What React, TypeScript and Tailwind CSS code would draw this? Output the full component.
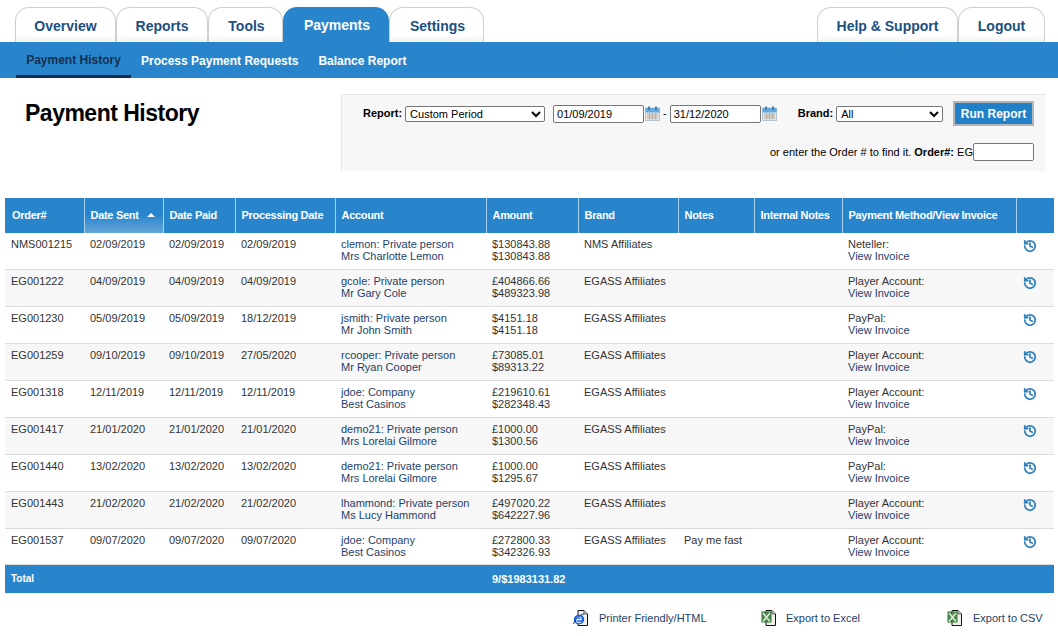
import { History } from "lucide-react";

const tabs = [
  { label: "Overview", w: "w-[101px]" },
  { label: "Reports", w: "w-[92px]" },
  { label: "Tools", w: "w-[75px] pl-[2px]" },
  { label: "Payments", w: "w-[106px] pl-[2px]", active: true },
  { label: "Settings", w: "w-[95px] pl-[2px]" },
];

const rows = [
  ["NMS001215", "02/09/2019", "02/09/2019", "02/09/2019", "clemon: Private person", "Mrs Charlotte Lemon", "$130843.88", "$130843.88", "NMS Affiliates", "", "Neteller:"],
  ["EG001222", "04/09/2019", "04/09/2019", "04/09/2019", "gcole: Private person", "Mr Gary Cole", "£404866.66", "$489323.98", "EGASS Affiliates", "", "Player Account:"],
  ["EG001230", "05/09/2019", "05/09/2019", "18/12/2019", "jsmith: Private person", "Mr John Smith", "$4151.18", "$4151.18", "EGASS Affiliates", "", "PayPal:"],
  ["EG001259", "09/10/2019", "09/10/2019", "27/05/2020", "rcooper: Private person", "Mr Ryan Cooper", "£73085.01", "$89313.22", "EGASS Affiliates", "", "Player Account:"],
  ["EG001318", "12/11/2019", "12/11/2019", "12/11/2019", "jdoe: Company", "Best Casinos", "£219610.61", "$282348.43", "EGASS Affiliates", "", "Player Account:"],
  ["EG001417", "21/01/2020", "21/01/2020", "21/01/2020", "demo21: Private person", "Mrs Lorelai Gilmore", "£1000.00", "$1300.56", "EGASS Affiliates", "", "PayPal:"],
  ["EG001440", "13/02/2020", "13/02/2020", "13/02/2020", "demo21: Private person", "Mrs Lorelai Gilmore", "£1000.00", "$1295.67", "EGASS Affiliates", "", "PayPal:"],
  ["EG001443", "21/02/2020", "21/02/2020", "21/02/2020", "lhammond: Private person", "Ms Lucy Hammond", "£497020.22", "$642227.96", "EGASS Affiliates", "", "Player Account:"],
  ["EG001537", "09/07/2020", "09/07/2020", "09/07/2020", "jdoe: Company", "Best Casinos", "£272800.33", "$342326.93", "EGASS Affiliates", "Pay me fast", "Player Account:"],
];

const headers = [
  { label: "Order#", w: "w-[79px]" },
  { label: "Date Sent", w: "w-[79px]", sorted: true },
  { label: "Date Paid", w: "w-[72px]" },
  { label: "Processing Date", w: "w-[100px]" },
  { label: "Account", w: "w-[151px]" },
  { label: "Amount", w: "w-[92px]" },
  { label: "Brand", w: "w-[100px]" },
  { label: "Notes", w: "w-[76px]" },
  { label: "Internal Notes", w: "w-[88px]" },
  { label: "Payment Method/View Invoice", w: "w-[174px]" },
  { label: "", w: "w-[38px]" },
];

function Tab({ label, w, active }: { label: string; w: string; active?: boolean }) {
  return (
    <a
      className={
        active
          ? `${w} flex h-[35px] items-center justify-center rounded-t-[14px] bg-[#2885cc] pt-[2px] text-[14px] font-bold text-white`
          : `${w} flex h-[35px] items-center justify-center rounded-t-[14px] border border-b-0 border-[#cfcfcf] bg-gradient-to-b from-white from-80% to-[#f1f1f1] pt-[2px] text-[14px] font-bold text-[#1c4f82]`
      }
    >
      {label}
    </a>
  );
}

function CalendarIcon() {
  return (
    <svg width="15" height="15" viewBox="0 0 15 15" className="shrink-0">
      <rect x="0.5" y="2" width="14" height="12.5" fill="#e9e6e1" stroke="#b5c4cf" />
      <rect x="0.5" y="2" width="14" height="4.5" fill="#62acdd" />
      <rect x="3" y="0.5" width="2" height="3.5" fill="#4d7c9c" />
      <rect x="10" y="0.5" width="2" height="3.5" fill="#4d7c9c" />
      <path d="M2 8h11M2 10h11M2 12h11M4.5 7.5v6M7.5 7.5v6M10.5 7.5v6" stroke="#a9a49c" strokeWidth="0.8" />
    </svg>
  );
}

function DocIcon({ children }: { children: React.ReactNode }) {
  return (
    <svg width="16" height="16" viewBox="0 0 16 16" className="shrink-0">
      <path d="M5 0.5h6l3.5 3.5v11.5H5z" fill="#f2f2ea" stroke="#111" strokeWidth="1" />
      <path d="M11 0.5v3.5h3.5" fill="#cfcfcf" stroke="#444" strokeWidth="0.8" />
      {children}
    </svg>
  );
}

function IeIcon() {
  return (
    <DocIcon>
      <ellipse cx="6" cy="9.5" rx="5.2" ry="4.8" fill="#1a5fe0" />
      <rect x="3" y="8.8" width="6" height="1.4" fill="#fff" />
      <path d="M3.6 8.6a2.5 2.5 0 0 1 4.8 0M3.6 10.4a2.5 2.5 0 0 0 4.4 1.2" fill="none" stroke="#d6e4ff" strokeWidth="1.3" />
      <path d="M0.5 14c2-5.5 6-9 10.5-10" fill="none" stroke="#0b3088" strokeWidth="1" />
    </DocIcon>
  );
}

function ExcelIcon() {
  return (
    <DocIcon>
      <rect x="0.5" y="1.5" width="10" height="11" fill="#2f7d32" />
      <path d="M1 4.5h9M1 7h9M1 9.5h9M3 2v10M5.5 2v10M8 2v10" stroke="#6f8f6f" strokeWidth="0.8" />
      <path d="M2 3l7 8.5M9 3l-7 8.5" stroke="#d9eed3" strokeWidth="1.5" />
    </DocIcon>
  );
}

export default function App() {
  return (
    <div className="h-[636px] w-[1058px] overflow-hidden bg-white font-['Liberation_Sans',Arial,sans-serif] text-[11px] text-[#333]">
      <div className="flex justify-between pl-[15px] pr-[13px] pt-[7px]">
        <div className="flex">
          {tabs.map((t) => (
            <Tab key={t.label} {...t} />
          ))}
        </div>
        <div className="flex">
          <Tab label="Help & Support" w="w-[141px]" />
          <Tab label="Logout" w="w-[87px]" />
        </div>
      </div>

      <div className="flex h-[36px] bg-[#2885cc] pl-[16px] text-[12px] font-bold text-white">
        <a className="flex w-[115px] items-center justify-center border-b-[3px] border-[#0f2f4f] pt-[2px] text-[#12304f]">Payment History</a>
        <a className="ml-[10px] flex items-center pt-[1px]">Process Payment Requests</a>
        <a className="ml-[20px] flex items-center pt-[1px]">Balance Report</a>
      </div>

      <div className="flex pl-[25px] pr-[12px] pt-[16px]">
        <h1 className="mt-[5px] w-[316px] text-[23px] leading-[28px] font-bold tracking-[-0.5px] text-black">Payment History</h1>
        <div className="h-[77px] w-[705px] border-t border-l border-[#e6e6e6] bg-[#f7f7f7] pl-[21px] pr-[12px] text-black">
          <div className="flex h-[35px] items-center pt-[2px]">
            <label className="font-bold">Report:</label>
            <select defaultValue="Custom Period" className="ml-[3px] h-[16px] w-[140px] rounded-[2px] border border-[#767676] bg-white text-[11px]">
              <option>Custom Period</option>
            </select>
            <input readOnly value="01/09/2019" className="ml-[8px] h-[18px] w-[91px] rounded-[2px] border border-[#767676] bg-white px-[3px] text-[11px]" />
            <span className="ml-[1px]"><CalendarIcon /></span>
            <span className="ml-[3px] mr-[3px]">-</span>
            <input readOnly value="31/12/2020" className="h-[18px] w-[91px] rounded-[2px] border border-[#767676] bg-white px-[3px] text-[11px]" />
            <span className="ml-[1px]"><CalendarIcon /></span>
            <label className="ml-[21px] font-bold">Brand:</label>
            <select defaultValue="All" className="ml-[3px] h-[16px] w-[107px] rounded-[2px] border border-[#767676] bg-white text-[11px]">
              <option>All</option>
            </select>
            <button className="ml-[10px] h-[25px] w-[81px] border-2 border-[#b5b5b5] bg-[#2280c8] text-[12px] font-bold text-white">Run Report</button>
          </div>
          <div className="mt-[13px] flex items-center justify-end">
            <span>or enter the Order # to find it. <b>Order#:</b> EG</span>
            <input readOnly className="h-[18px] w-[61px] rounded-[2px] border border-[#767676] bg-white" />
          </div>
        </div>
      </div>

      <div className="ml-[5px] mt-[27px] w-[1049px]">
        <table className="w-full table-fixed border-collapse">
          <thead>
            <tr className="h-[35px] bg-[#2885cc] text-left text-white">
              {headers.map((h, i) => (
                <th
                  key={i}
                  className={`${h.w} ${i > 0 ? "border-l border-[#a9d0ec] pl-[6px]" : "pl-[7px]"} ${h.sorted ? "bg-gradient-to-b from-[#2885cc] from-50% to-[#64a7da]" : ""} whitespace-nowrap pb-[1px] text-[11px] font-bold tracking-[-0.3px]`}
                >
                  {h.label}
                  {h.sorted && (
                    <span className="ml-[8px] inline-block border-x-[4px] border-b-[4px] border-x-transparent border-b-white align-[2px]" />
                  )}
                </th>
              ))}
            </tr>
          </thead>
          <tbody>
            {rows.map((r, i) => (
              <tr key={r[0]} className={`${i === 0 || i === 8 ? "h-[36px]" : "h-[37px]"} border-b border-[#dcdcdc] align-top leading-[12px] ${i % 2 ? "bg-[#f7f7f7]" : "bg-white"}`}>
                <td className="px-[6px] pt-[5px]">{r[0]}</td>
                <td className="px-[6px] pt-[5px]">{r[1]}</td>
                <td className="px-[6px] pt-[5px]">{r[2]}</td>
                <td className="px-[6px] pt-[5px]">{r[3]}</td>
                <td className="px-[6px] pt-[5px]">
                  <div className="text-[#1d3f6b]">{r[4]}</div>
                  <div className="text-[#1d3f6b]">{r[5]}</div>
                </td>
                <td className="px-[6px] pt-[5px]">
                  <div>{r[6]}</div>
                  <div>{r[7]}</div>
                </td>
                <td className="px-[6px] pt-[5px]">{r[8]}</td>
                <td className="px-[6px] pt-[5px]">{r[9]}</td>
                <td className="px-[6px] pt-[5px]"></td>
                <td className="px-[6px] pt-[5px]">
                  <div>{r[10]}</div>
                  <div className="text-[#1d3f6b]">View Invoice</div>
                </td>
                <td className="pl-[7px] pt-[6px]">
                  <History size={14} strokeWidth={3} className="text-[#2f7fbd]" />
                </td>
              </tr>
            ))}
            <tr className="h-[29px] bg-[#2885cc] text-[10px] font-bold text-white">
              <td colSpan={5} className="px-[6px]">Total</td>
              <td colSpan={6} className="px-[6px] text-[11px]">9/$1983131.82</td>
            </tr>
          </tbody>
        </table>
      </div>

      <div className="mt-[17px] flex items-center pl-[573px] text-[#1d3f6b]">
        <IeIcon />
        <a className="ml-[10px] w-[162px]">Printer Friendly/HTML</a>
        <ExcelIcon />
        <a className="ml-[9px] w-[161px]">Export to Excel</a>
        <ExcelIcon />
        <a className="ml-[10px]">Export to CSV</a>
      </div>
    </div>
  );
}
